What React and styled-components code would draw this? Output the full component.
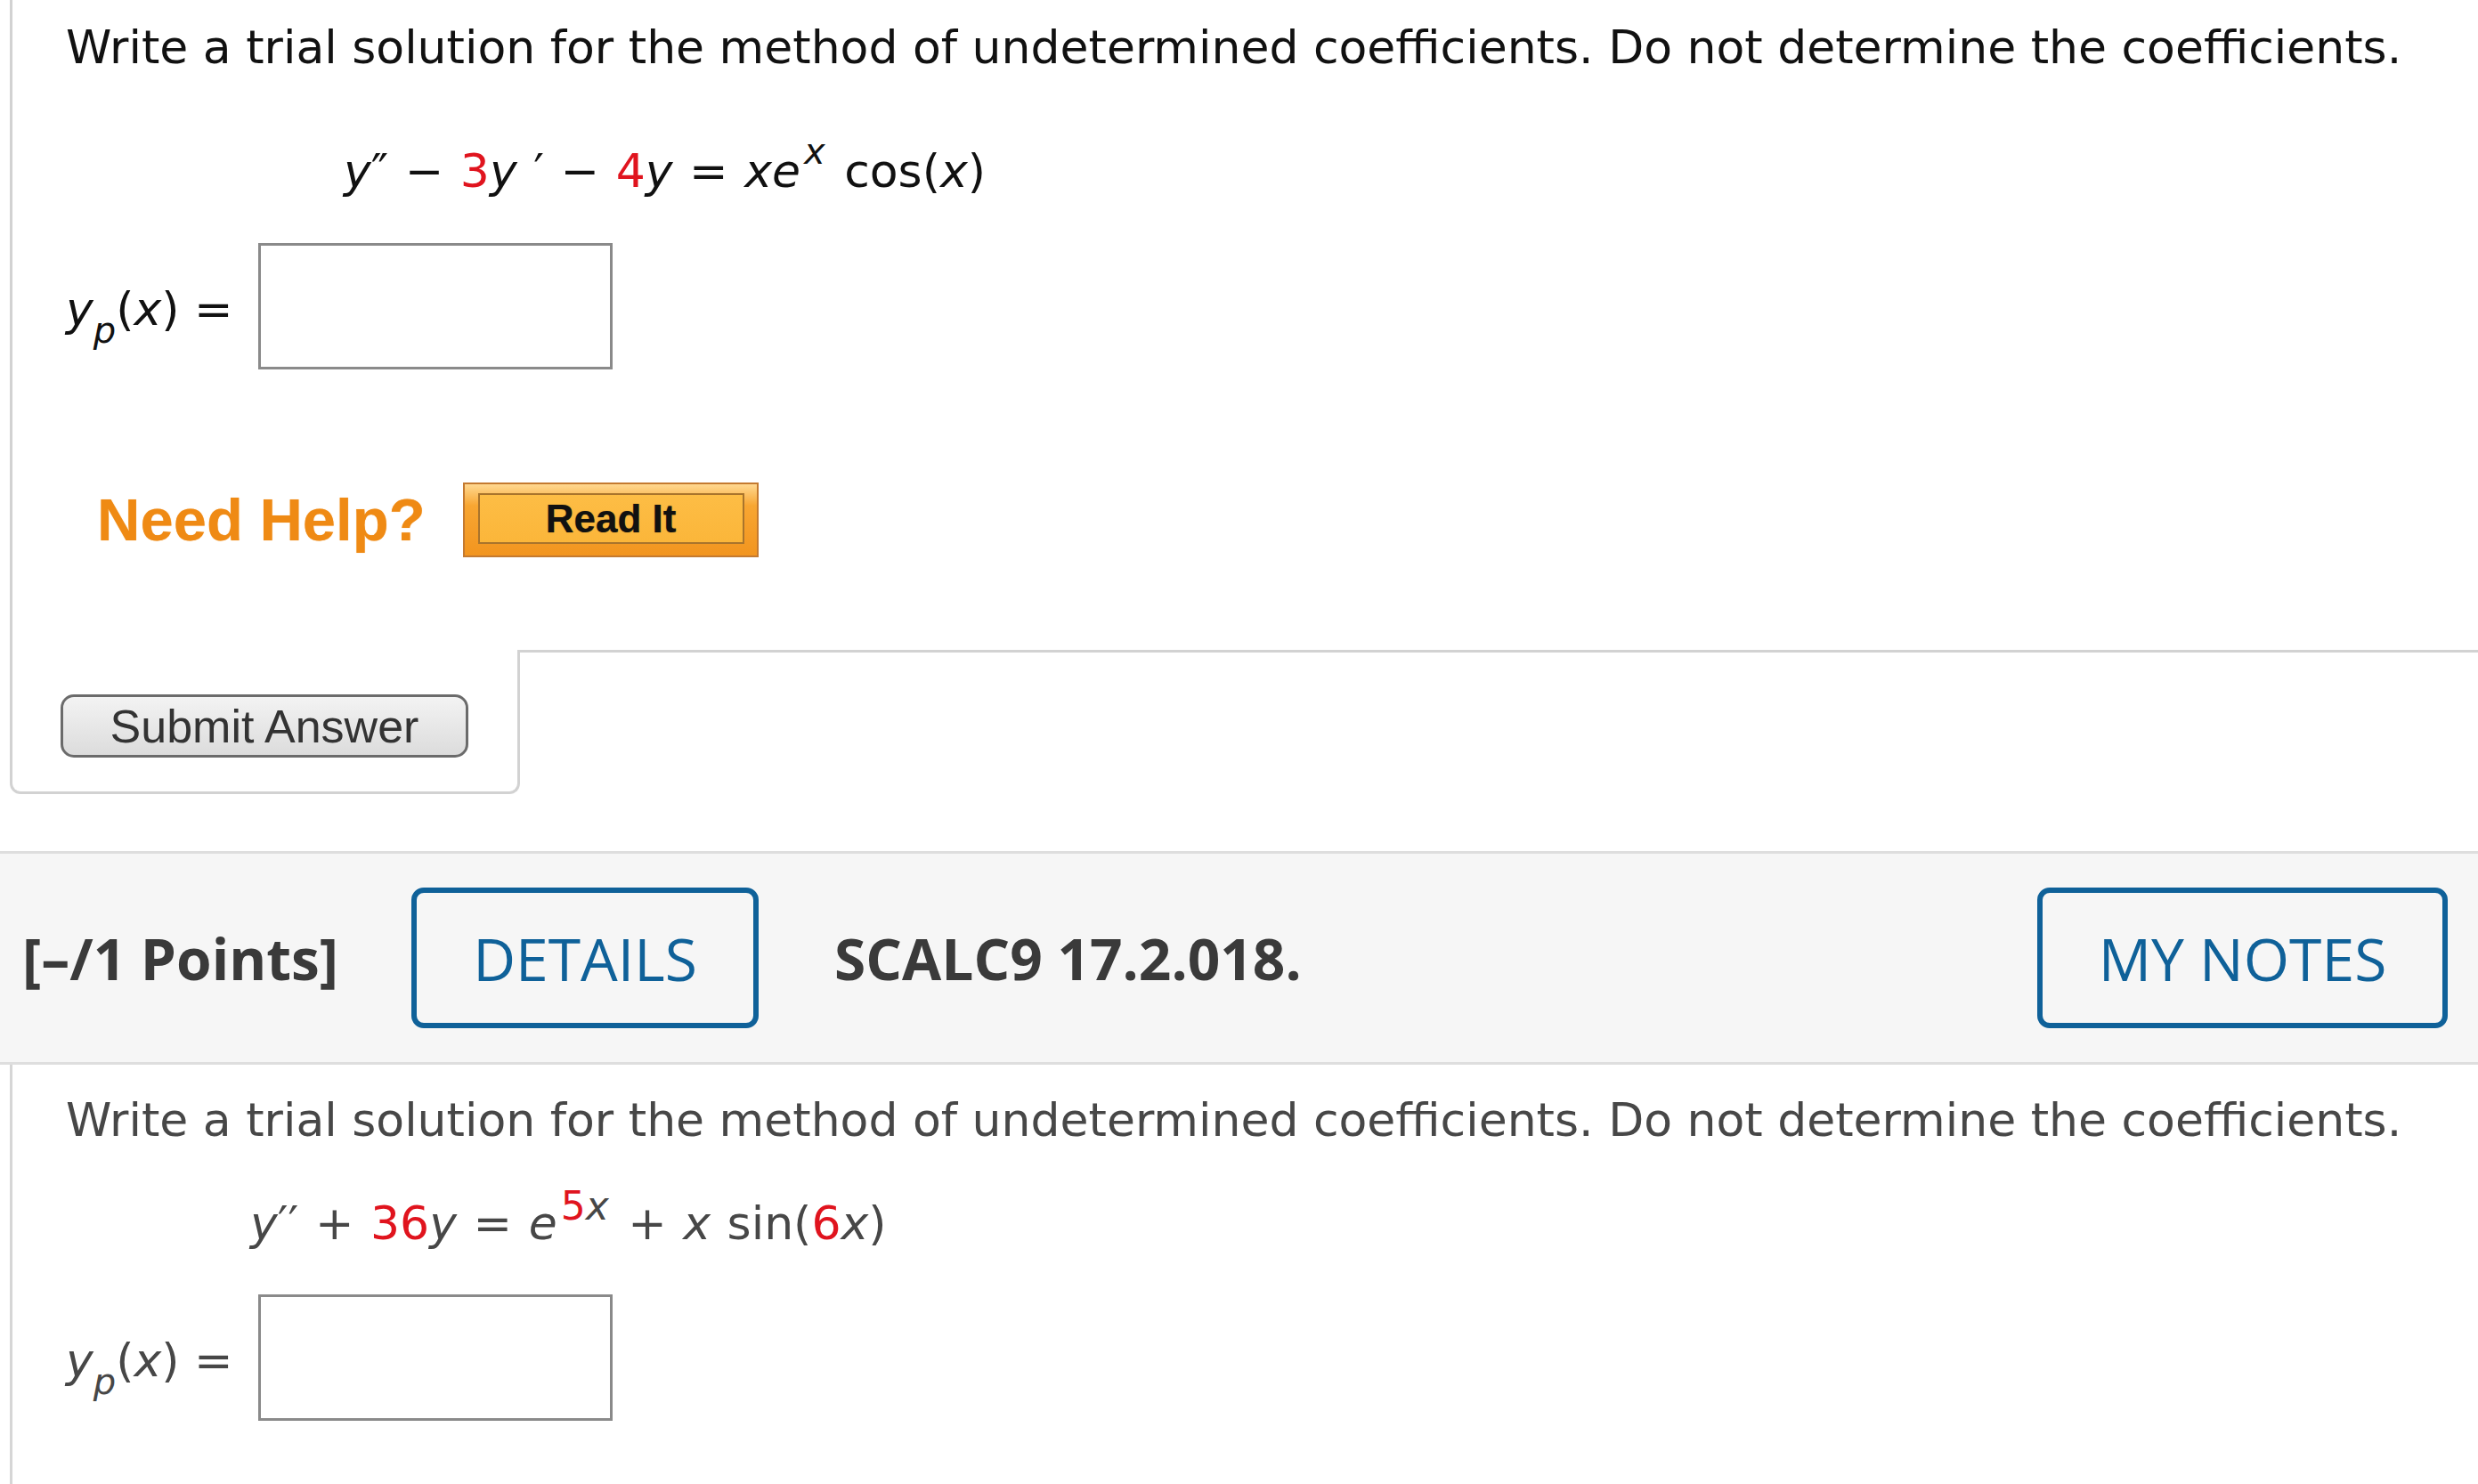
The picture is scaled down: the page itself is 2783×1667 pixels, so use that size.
import React from "react";
import styled, { createGlobalStyle } from "styled-components";

const GlobalStyle = createGlobalStyle`
  html, body {
    margin: 0;
    padding: 0;
    background: #fff;
  }
`;

const Page = styled.div`
  width: 2783px;
  height: 1667px;
  overflow: hidden;
  font-family: "DejaVu Sans", Verdana, sans-serif;
`;

const QuestionTop = styled.div`
  margin-left: 11px;
  border-left: 3px solid #d2d2d2;
  padding: 23px 0 0 60px;
  box-sizing: border-box;
  height: 730px;
`;

const Prompt = styled.p`
  margin: 0;
  font-size: 52px;
  line-height: 60px;
  color: ${(p) => (p.$muted ? "#474747" : "#111")};
  white-space: nowrap;
`;

const Equation = styled.div`
  margin-top: ${(p) => p.$top}px;
  padding-left: ${(p) => p.$indent}px;
  font-size: 52px;
  line-height: 60px;
  height: 60px;
  word-spacing: 2px;
  color: ${(p) => (p.$muted ? "#474747" : "#111")};
  white-space: nowrap;
`;

const Var = styled.i`
  font-style: italic;
`;

const Coef = styled.span`
  color: #e0141e;
`;

const Sup = styled.sup`
  font-size: ${(p) => p.$size}px;
  line-height: 0;
  vertical-align: ${(p) => p.$raise}px;
  margin: 0 3px 0 4px;
`;

const AnswerRow = styled.div`
  display: flex;
  align-items: center;
  margin-top: ${(p) => p.$top}px;
  gap: 28px;
`;

const Label = styled.span`
  font-size: 52px;
  line-height: 60px;
  padding-top: 6px;
  color: ${(p) => (p.$muted ? "#474747" : "#111")};
  white-space: nowrap;
`;

const Sub = styled.sub`
  font-size: 40px;
  line-height: 0;
  font-style: italic;
  vertical-align: -20px;
`;

const AnswerBox = styled.div`
  width: 398px;
  height: 142px;
  box-sizing: border-box;
  border: 3px solid #8a8a8a;
  background: #fff;
`;

const HelpRow = styled.div`
  display: flex;
  align-items: center;
  margin-top: 127px;
  padding-left: 35px;
  gap: 42px;
`;

const HelpText = styled.span`
  font-family: "Liberation Sans", Arial, sans-serif;
  font-weight: 700;
  font-size: 67px;
  line-height: 70px;
  color: #ef8a14;
  text-shadow: 0 0 1px rgba(239, 138, 20, 0.6);
`;

const ReadItButton = styled.button`
  width: 332px;
  height: 84px;
  box-sizing: border-box;
  padding: 10px 14px 13px 15px;
  border: 2px solid #c47a30;
  background: linear-gradient(#ffd890 0%, #f8a632 30%, #f2951f 100%);
  cursor: pointer;
`;

const ReadItInner = styled.span`
  display: flex;
  align-items: center;
  justify-content: center;
  height: 100%;
  box-sizing: border-box;
  border: 2px solid #a9742c;
  background: linear-gradient(#fdbd45, #fbb63a);
  font-family: "Liberation Sans", Arial, sans-serif;
  font-weight: 700;
  font-size: 44px;
  color: #111;
  text-shadow: 0 0 1px rgba(0, 0, 0, 0.5);
`;

const BottomRow = styled.div`
  display: flex;
  align-items: flex-start;
  margin-left: 11px;
`;

const SubmitCell = styled.div`
  width: 573px;
  box-sizing: border-box;
  padding: 50px 0 38px 54px;
  border: 3px solid #d2d2d2;
  border-top: none;
  border-radius: 0 0 12px 12px;
`;

const SubmitButton = styled.button`
  width: 458px;
  height: 71px;
  padding: 0;
  box-sizing: border-box;
  border: 3px solid #6b6b6b;
  border-radius: 15px;
  background: linear-gradient(#f3f3f3, #dcdcdc);
  font-family: "Liberation Sans", Arial, sans-serif;
  font-size: 52px;
  color: #333;
  cursor: pointer;
`;

const RestCell = styled.div`
  flex: 1;
  margin-left: -3px;
  border-top: 3px solid #d2d2d2;
`;

const Band = styled.div`
  display: flex;
  align-items: center;
  margin-top: 64px;
  height: 240px;
  box-sizing: border-box;
  padding: 0 34px 0 25px;
  background: #f6f6f6;
  border-top: 3px solid #dedede;
  border-bottom: 3px solid #dedede;
  font-family: "Open Sans", sans-serif;
`;

const BandTitle = styled.span`
  margin-left: ${(p) => p.$gap || 0}px;
  font-weight: 700;
  font-size: 64px;
  color: #3a3a3a;
  white-space: nowrap;
`;

const OutlineButton = styled.button`
  margin-left: ${(p) => p.$gap || 0}px;
  width: ${(p) => p.$w}px;
  height: 158px;
  box-sizing: border-box;
  border: 6px solid #0f6199;
  border-radius: 14px;
  background: transparent;
  font-family: "Open Sans", sans-serif;
  font-size: 66px;
  color: #0f6199;
  cursor: pointer;
`;

const Spacer = styled.div`
  flex: 1;
`;

const QuestionBottom = styled.div`
  margin-left: 11px;
  border-left: 3px solid #d6d6d6;
  padding: 32px 0 0 60px;
  height: 600px;
`;

export default function App() {
  return (
    <Page>
      <GlobalStyle />
      <QuestionTop>
        <Prompt>
          Write a trial solution for the method of undetermined coefficients. Do not determine the coefficients.
        </Prompt>
        <Equation $top={79} $indent={312}>
          <Var>y</Var>″ − <Coef>3</Coef><Var>y</Var> ′ − <Coef>4</Coef><Var>y</Var> = <Var>xe</Var>
          <Sup $size={40} $raise={26}><Var>x</Var></Sup> cos(<Var>x</Var>)
        </Equation>
        <AnswerRow $top={51}>
          <Label>
            <Var>y</Var><Sub>p</Sub>(<Var>x</Var>) =
          </Label>
          <AnswerBox />
        </AnswerRow>
        <HelpRow>
          <HelpText>Need Help?</HelpText>
          <ReadItButton>
            <ReadItInner>Read It</ReadItInner>
          </ReadItButton>
        </HelpRow>
      </QuestionTop>
      <BottomRow>
        <SubmitCell>
          <SubmitButton>Submit Answer</SubmitButton>
        </SubmitCell>
        <RestCell />
      </BottomRow>
      <Band>
        <BandTitle>[–/1 Points]</BandTitle>
        <OutlineButton $gap={82} $w={390}>DETAILS</OutlineButton>
        <BandTitle $gap={85}>SCALC9 17.2.018.</BandTitle>
        <Spacer />
        <OutlineButton $w={461}>MY NOTES</OutlineButton>
      </Band>
      <QuestionBottom>
        <Prompt $muted>
          Write a trial solution for the method of undetermined coefficients. Do not determine the coefficients.
        </Prompt>
        <Equation $muted $top={56} $indent={207}>
          <Var>y</Var>′′ + <Coef>36</Coef><Var>y</Var> = <Var>e</Var>
          <Sup $size={44} $raise={22}><Coef>5</Coef><Var>x</Var></Sup> + <Var>x</Var> sin(<Coef>6</Coef><Var>x</Var>)
        </Equation>
        <AnswerRow $top={50}>
          <Label $muted>
            <Var>y</Var><Sub>p</Sub>(<Var>x</Var>) =
          </Label>
          <AnswerBox />
        </AnswerRow>
      </QuestionBottom>
    </Page>
  );
}
